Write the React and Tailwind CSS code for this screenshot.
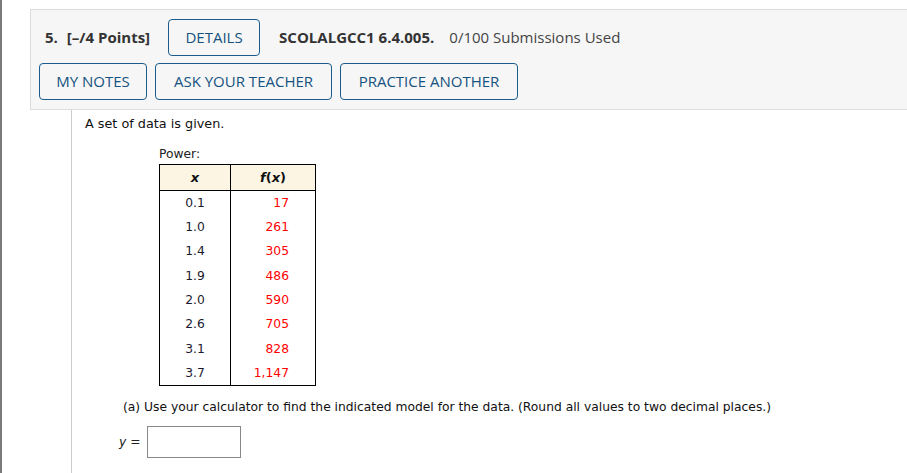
import React from "react";

const rows = [
  ["0.1", "17"],
  ["1.0", "261"],
  ["1.4", "305"],
  ["1.9", "486"],
  ["2.0", "590"],
  ["2.6", "705"],
  ["3.1", "828"],
  ["3.7", "1,147"],
];

const Btn = ({ w, children }) => (
  <button
    className={`${w} h-[37px] flex items-center justify-center rounded-[4px] border border-[#1b5c8c] text-[#15527f] text-[15px] font-medium bg-transparent`}
  >
    {children}
  </button>
);

const App = () => {
  return (
    <div className="h-[473px] w-full overflow-hidden border-l-2 border-[#7a7a7a] bg-white">
      <div className="ml-[28px] mt-[9px] border-t border-b border-l border-[#dcdcdc] bg-[#f6f6f6] pt-[8px] pb-[9px] font-['Open_Sans',sans-serif]">
        <div className="flex items-center h-[37px] pt-[1px]">
          <span className="ml-[14px] font-bold text-[15px] text-[#333]">5.</span>
          <span className="ml-[9px] font-bold text-[15px] text-[#333]">[–/4 Points]</span>
          <div className="ml-[18px]">
            <Btn w="w-[92px]">DETAILS</Btn>
          </div>
          <span className="ml-[19px] font-bold text-[15px] text-[#333]">SCOLALGCC1 6.4.005.</span>
          <span className="ml-[15px] text-[15px] text-[#444]">0/100 Submissions Used</span>
        </div>
        <div className="flex items-center gap-[8px] ml-[8px] mt-[8px]">
          <Btn w="w-[108px]">MY NOTES</Btn>
          <Btn w="w-[177px]">ASK YOUR TEACHER</Btn>
          <Btn w="w-[178px]">PRACTICE ANOTHER</Btn>
        </div>
      </div>

      <div className="ml-[69px] h-[400px] border-l border-[#cccccc] pl-[13px] pt-[6px] font-['DejaVu_Sans',Verdana,sans-serif] text-[12.3px] text-[#111]">
        <p className="leading-[16px] text-[12.8px]">A set of data is given.</p>
        <div className="ml-[74px] mt-[14px]">
          <p className="leading-[16px] text-[#222]">Power:</p>
          <table className="mt-[2px] border-collapse border border-black w-[157px]">
            <thead>
              <tr className="bg-[#fdf5e4] h-[26px]">
                <th className="w-[71px] border-r border-b border-black font-bold italic text-center text-[13px]">x</th>
                <th className="border-b border-black font-bold text-center text-[13px]">
                  <i>f</i>(<i>x</i>)
                </th>
              </tr>
            </thead>
            <tbody>
              {rows.map(([x, fx], i) => (
                <tr key={i} className="h-[24.4px]">
                  <td className="border-r border-black text-center text-[#1a1a2e]">{x}</td>
                  <td className="text-right pr-[26px] text-[#f00]">{fx}</td>
                </tr>
              ))}
            </tbody>
          </table>
        </div>
        <p className="ml-[38px] mt-[13px] leading-[16px]">
          (a) Use your calculator to find the indicated model for the data. (Round all values to two decimal places.)
        </p>
        <div className="flex items-center ml-[34px] mt-[11px]">
          <span className="text-[#222]">
            <i>y</i> =
          </span>
          <div className="ml-[6px] w-[94px] h-[32px] border border-[#888] bg-white"></div>
        </div>
      </div>
    </div>
  );
};

export default App;
